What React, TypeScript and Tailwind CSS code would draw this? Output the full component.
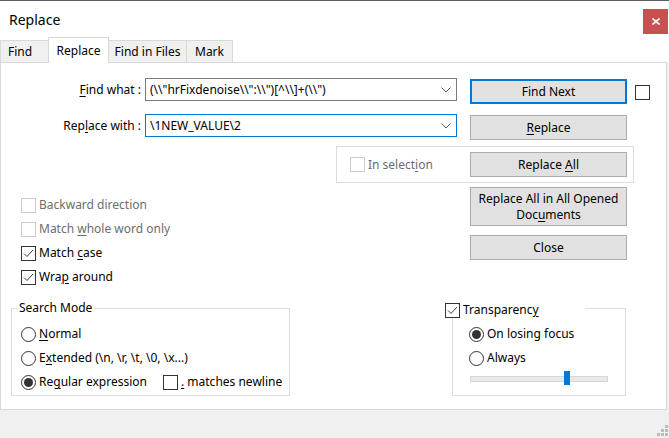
import React from 'react';

const Acc = ({ children }: { children: React.ReactNode }) => (
  <span className="underline decoration-1 underline-offset-2">{children}</span>
);

const CheckBox = ({ checked = false, disabled = false }: { checked?: boolean; disabled?: boolean }) => (
  <span
    className={`w-[15px] h-[15px] shrink-0 border bg-white flex items-center justify-center ${
      disabled ? 'border-[#cccccc]' : 'border-[#333333]'
    }`}
  >
    {checked && (
      <svg width="13" height="13" viewBox="0 0 13 13">
        <polyline points="2,6.5 5,9.5 11,3" fill="none" stroke="#3c3c3c" strokeWidth="1" />
      </svg>
    )}
  </span>
);

const Radio = ({ checked = false }: { checked?: boolean }) => (
  <span className="w-[15px] h-[15px] shrink-0 rounded-full border border-[#333333] bg-white flex items-center justify-center">
    {checked && <span className="w-[9px] h-[9px] rounded-full bg-[#333333]" />}
  </span>
);

const Btn = ({
  children,
  primary = false,
  className = '',
}: {
  children: React.ReactNode;
  primary?: boolean;
  className?: string;
}) => (
  <div
    className={`w-[157px] shrink-0 bg-[#e1e1e1] flex items-center justify-center text-center leading-[16px] ${
      primary ? 'border-2 border-[#0078d7]' : 'border border-[#adadad]'
    } ${className}`}
  >
    {children}
  </div>
);

const Combo = ({ value, focused = false }: { value: string; focused?: boolean }) => (
  <div
    className={`ml-[4px] w-[312px] h-[23px] shrink-0 border bg-white flex items-center pl-[4px] pr-[5px] ${
      focused ? 'border-[#0078d7]' : 'border-[#7a7a7a]'
    }`}
  >
    <span className="flex-1 whitespace-nowrap overflow-hidden">{value}</span>
    <svg width="10" height="6" viewBox="0 0 10 6">
      <polyline points="0.5,0.5 5,5 9.5,0.5" fill="none" stroke="#5e5e5e" strokeWidth="1" />
    </svg>
  </div>
);

const CheckRow = ({
  children,
  checked = false,
  disabled = false,
}: {
  children: React.ReactNode;
  checked?: boolean;
  disabled?: boolean;
}) => (
  <div className={`h-[24px] flex items-center gap-[3px] ${disabled ? 'text-[#6d6d6d]' : ''}`}>
    <CheckBox checked={checked} disabled={disabled} />
    <span>{children}</span>
  </div>
);

export default function App() {
  return (
    <div className="w-[669px] h-[438px] overflow-hidden bg-white text-black text-[12px] leading-[16px] font-['Noto_Sans',sans-serif] select-none">
      <div className="h-px bg-[#5c5c5c]" />

      {/* title bar */}
      <div className="h-[36px] flex items-start justify-between">
        <div className="pl-[9px] pt-[10px] text-[14px] leading-[18px]">Replace</div>
        <div className="mt-[8px] mr-px w-[25px] h-[25px] bg-[#c75050] flex items-center justify-center">
          <svg width="8" height="7" viewBox="0 0 8 7">
            <path d="M0.5 0.5 L7.5 6.5 M7.5 0.5 L0.5 6.5" stroke="white" strokeWidth="1.6" />
          </svg>
        </div>
      </div>

      {/* tabs */}
      <div className="w-[667px] h-[26px] flex items-end border-b border-[#d9d9d9]">
        <div className="w-[48px] h-[22px] border-l border-t border-[#d9d9d9] bg-[#f0f0f0] flex items-center pl-[7px]">
          Find
        </div>
        <div className="w-[61px] h-[26px] -mb-px border-l border-t border-r border-[#d9d9d9] bg-white flex items-center justify-center">
          Replace
        </div>
        <div className="w-[77px] h-[22px] border-t border-[#d9d9d9] bg-[#f0f0f0] flex items-center justify-center">
          Find in Files
        </div>
        <div className="w-[47px] h-[22px] border-l border-t border-r border-[#d9d9d9] bg-[#f0f0f0] flex items-center justify-center">
          Mark
        </div>
      </div>

      {/* panel */}
      <div className="flex bg-[#f0f0f0]">
        <div className="w-[667px] h-[347px] border-l border-r border-b border-[#d9d9d9] bg-white flex flex-col">
          <div className="mt-[15px] flex items-start">
            <div className="w-[140px] h-[23px] flex items-center justify-end">
              <Acc>F</Acc>ind what :
            </div>
            <Combo value={'(\\\\"hrFixdenoise\\\\":\\\\")[^\\\\]+(\\\\")'} />
            <Btn primary className="ml-[13px] mt-px h-[25px]">
              Find Next
            </Btn>
            <div className="ml-[8px] mt-[7px]">
              <CheckBox />
            </div>
          </div>

          <div className="mt-[10px] flex items-start">
            <div className="w-[140px] h-[23px] flex items-center justify-end">
              Rep<Acc>l</Acc>ace with :
            </div>
            <Combo value={'\\1NEW_VALUE\\2'} focused />
            <Btn className="ml-[13px] mt-px h-[25px]">
              <span>
                <Acc>R</Acc>eplace
              </span>
            </Btn>
          </div>

          <div className="mt-[6px] ml-[335px] w-[298px] h-[37px] border border-[#dcdcdc] flex items-center">
            <div className="ml-[13px] w-[120px] flex items-center gap-[3px] text-[#6d6d6d]">
              <CheckBox disabled />
              <span>
                In select<Acc>i</Acc>on
              </span>
            </div>
            <Btn className="h-[25px]">
              <span>
                Replace <Acc>A</Acc>ll
              </span>
            </Btn>
          </div>

          <div className="mt-[4px] flex items-start">
            <div className="w-[469px] pl-[20px] pt-[6px]">
              <CheckRow disabled>Backward direction</CheckRow>
              <CheckRow disabled>
                Match <Acc>w</Acc>hole word only
              </CheckRow>
              <CheckRow checked>
                Match <Acc>c</Acc>ase
              </CheckRow>
              <CheckRow checked>
                Wra<Acc>p</Acc> around
              </CheckRow>
            </div>
            <div className="flex flex-col">
              <Btn className="h-[39px] flex-col">
                <span className="block">Replace All in All Opened</span>
                <span className="block">
                  Doc<Acc>u</Acc>ments
                </span>
              </Btn>
              <Btn className="mt-[9px] h-[25px]">Close</Btn>
            </div>
          </div>

          <div className="mt-[19px] flex items-start">
            {/* search mode */}
            <div className="ml-[10px] w-[279px] h-[88px] border border-[#dcdcdc] flex flex-col">
              <div className="-mt-[9px] ml-[5px] self-start px-[2px] bg-white h-[16px] leading-[16px]">
                Search Mode
              </div>
              <div className="mt-[6px] h-[24px] pl-[9px] flex items-center gap-[3px]">
                <Radio />
                <span>
                  <Acc>N</Acc>ormal
                </span>
              </div>
              <div className="h-[24px] pl-[9px] flex items-center gap-[3px] whitespace-nowrap">
                <Radio />
                <span>
                  E<Acc>x</Acc>tended {'(\\n, \\r, \\t, \\0, \\x...)'}
                </span>
              </div>
              <div className="h-[24px] pl-[9px] flex items-center whitespace-nowrap overflow-hidden">
                <div className="w-[142px] shrink-0 flex items-center gap-[3px]">
                  <Radio checked />
                  <span>
                    Re<Acc>g</Acc>ular expression
                  </span>
                </div>
                <div className="flex items-center gap-[3px]">
                  <CheckBox />
                  <span>
                    <Acc>.</Acc> matches newline
                  </span>
                </div>
              </div>
            </div>

            {/* transparency */}
            <div className="ml-[162px] w-[174px] h-[88px] border border-[#dcdcdc] flex flex-col">
              <div className="-mt-[7px] -ml-[8px] w-[140px] h-[16px] bg-white flex items-center gap-[3px]">
                <CheckBox checked />
                <span>
                  Transparenc<Acc>y</Acc>
                </span>
              </div>
              <div className="mt-[4px] h-[24px] pl-[16px] flex items-center gap-[3px]">
                <Radio checked />
                <span>On losing focus</span>
              </div>
              <div className="h-[24px] pl-[16px] flex items-center gap-[3px]">
                <Radio />
                <span>Always</span>
              </div>
              <div className="mt-[6px] ml-[17px] w-[138px] h-[6px] relative bg-[#e7eaea] border border-[#d6d6d6]">
                <div className="absolute left-[93px] -top-[6px] w-[6px] h-[14px] bg-[#0078d7]" />
              </div>
            </div>
          </div>
        </div>
      </div>

      {/* footer with size grip */}
      <div className="h-[28px] bg-[#f0f0f0] flex justify-end items-end pb-[2px] pr-px">
        <svg width="12" height="12" viewBox="0 0 12 12">
          <g fill="#bcbcbc">
            <rect x="9" y="1" width="3" height="3" />
            <rect x="5" y="5" width="3" height="3" />
            <rect x="9" y="5" width="3" height="3" />
            <rect x="1" y="9" width="3" height="3" />
            <rect x="5" y="9" width="3" height="3" />
            <rect x="9" y="9" width="3" height="3" />
          </g>
        </svg>
      </div>
    </div>
  );
}
